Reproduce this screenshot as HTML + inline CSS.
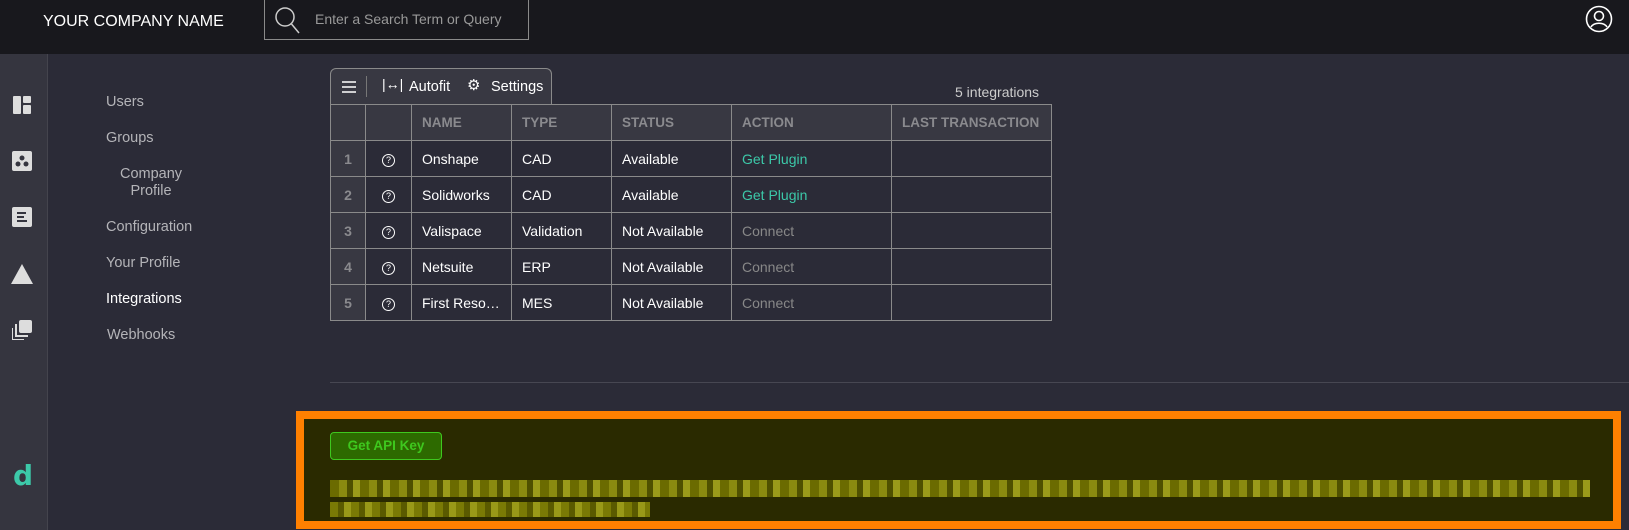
<!DOCTYPE html>
<html><head><style>
*{margin:0;padding:0;box-sizing:border-box}
body{width:1629px;height:530px;overflow:hidden;background:#2b2b37;font-family:"Liberation Sans",sans-serif;position:relative;color:#ddd}
.top{position:absolute;left:0;top:0;width:1629px;height:54px;background:#18181d}
.brand{position:absolute;left:43px;top:13px;color:#fff;font-size:16px}
.search{position:absolute;left:264px;top:-1px;width:265px;height:41px;border:1px solid #8a8a8a}
.search span{position:absolute;left:50px;top:11px;color:#999;font-size:14px}
.strip{position:absolute;left:0;top:54px;width:48px;height:476px;background:#35353f;border-right:1px solid #44444d}
.nav{position:absolute;font-size:14.5px;color:#b4b4b8}
.abs{position:absolute}
table{position:absolute;left:330px;top:104px;border-collapse:collapse;font-size:14px;table-layout:fixed;width:721px}
td{border:1px solid #8a8a8a;height:36px;padding:0 0 0 10px;color:#fff;white-space:nowrap;overflow:hidden}
th{border:1px solid #8a8a8a;height:36px;background:#383842;color:#8a8a8e;text-align:left;padding-left:10px;font-size:13.5px;white-space:nowrap}
td.n{background:#383842;color:#8a8a8e;font-weight:bold;text-align:center;padding:0}
td.q{text-align:center;padding:0}
.g{color:#3cc9a9}.c{color:#888}
.q i{display:inline-block;width:13px;height:13px;border:1.3px solid #fff;border-radius:50%;font-style:normal;font-size:9px;line-height:10px;text-align:center}
</style></head><body>
<div class="top">
<div class="brand">YOUR COMPANY NAME</div>
<div class="search"><svg class="abs" style="left:9px;top:5px" width="28" height="30" viewBox="0 0 28 30"><circle cx="11" cy="12" r="9" fill="none" stroke="#ccc" stroke-width="1.5"/><line x1="17.5" y1="19" x2="25" y2="28" stroke="#ccc" stroke-width="1.5"/></svg><span>Enter a Search Term or Query</span></div>
<svg class="abs" style="left:1585px;top:5px" width="28" height="28" viewBox="0 0 28 28"><circle cx="14" cy="14" r="12.5" fill="none" stroke="#fff" stroke-width="1.6"/><circle cx="14" cy="11" r="4.5" fill="none" stroke="#fff" stroke-width="1.6"/><path d="M6 22c3-5 13-5 16 0" fill="none" stroke="#fff" stroke-width="1.6"/></svg>
</div>
<div class="strip">
<svg class="abs" style="left:12px;top:41px" width="20" height="20"><rect x="1" y="1" width="8" height="18" rx="1" fill="#ddd"/><rect x="11" y="1" width="8" height="7" rx="1" fill="#ddd"/><rect x="11" y="10" width="8" height="9" rx="1" fill="#ddd"/></svg>
<svg class="abs" style="left:12px;top:97px" width="20" height="20"><rect x="0" y="0" width="20" height="20" rx="2" fill="#ddd"/><circle cx="10" cy="7" r="2.5" fill="#35353f"/><circle cx="6" cy="13" r="2.5" fill="#35353f"/><circle cx="14" cy="13" r="2.5" fill="#35353f"/></svg>
<svg class="abs" style="left:12px;top:153px" width="20" height="20"><rect x="0" y="0" width="20" height="20" rx="2" fill="#ddd"/><rect x="5" y="5" width="9" height="2" fill="#35353f"/><rect x="5" y="9" width="7" height="2" fill="#35353f"/><rect x="5" y="13" width="10" height="2" fill="#35353f"/></svg>
<svg class="abs" style="left:11px;top:210px" width="22" height="20"><path d="M11 0L22 20H0z" fill="#ddd"/></svg>
<svg class="abs" style="left:12px;top:266px" width="20" height="20"><rect x="7" y="0" width="13" height="13" rx="2" fill="#ddd"/><path d="M4 4v12h12M0 8v12h12" fill="none" stroke="#ddd" stroke-width="2"/></svg>
<div class="abs" style="left:13px;top:405px;color:#3cc9a9;font-weight:bold;font-size:28px;font-family:'DejaVu Sans',sans-serif">d</div>
</div>
<div class="nav" style="left:106px;top:94px">Users</div>
<div class="nav" style="left:106px;top:130px">Groups</div>
<div class="nav" style="left:120px;top:166px;text-align:center;line-height:17px">Company<br>Profile</div>
<div class="nav" style="left:106px;top:219px">Configuration</div>
<div class="nav" style="left:106px;top:255px">Your Profile</div>
<div class="nav" style="left:106px;top:291px;color:#fff">Integrations</div>
<div class="nav" style="left:107px;top:327px">Webhooks</div>

<div class="abs" style="left:330px;top:68px;width:222px;height:37px;background:#383842;border:1px solid #8a8a8a;border-bottom:none;border-radius:6px 6px 0 0;color:#fff;font-size:14.5px">
<svg class="abs" style="left:10px;top:11px" width="16" height="14"><path d="M1 2h14M1 7h14M1 12h14" stroke="#fff" stroke-width="1.4"/></svg>
<div class="abs" style="left:35px;top:7px;width:1px;height:21px;background:#777"></div>
<div class="abs" style="left:51px;top:7px;font-size:14px">|↔|</div>
<div class="abs" style="left:78px;top:10px">Autofit</div>
<div class="abs" style="left:136px;top:7px;font-size:15px">⚙</div>
<div class="abs" style="left:160px;top:10px">Settings</div>
</div>
<div class="abs" style="left:955px;top:84px;font-size:14px;color:#ccc">5 integrations</div>
<table>
<colgroup><col style="width:35px"><col style="width:46px"><col style="width:100px"><col style="width:100px"><col style="width:120px"><col style="width:160px"><col style="width:160px"></colgroup>
<tr><th style="padding:0"></th><th style="padding:0"></th><th>NAME</th><th>TYPE</th><th>STATUS</th><th>ACTION</th><th>LAST TRANSACTION</th></tr>
<tr><td class="n">1</td><td class="q"><i>?</i></td><td>Onshape</td><td>CAD</td><td>Available</td><td class="g">Get Plugin</td><td></td></tr>
<tr><td class="n">2</td><td class="q"><i>?</i></td><td>Solidworks</td><td>CAD</td><td>Available</td><td class="g">Get Plugin</td><td></td></tr>
<tr><td class="n">3</td><td class="q"><i>?</i></td><td>Valispace</td><td>Validation</td><td>Not Available</td><td class="c">Connect</td><td></td></tr>
<tr><td class="n">4</td><td class="q"><i>?</i></td><td>Netsuite</td><td>ERP</td><td>Not Available</td><td class="c">Connect</td><td></td></tr>
<tr><td class="n">5</td><td class="q"><i>?</i></td><td>First Reso…</td><td>MES</td><td>Not Available</td><td class="c">Connect</td><td></td></tr>
</table>
<div class="abs" style="left:330px;top:382px;width:1299px;height:1px;background:#474752"></div>
<div class="abs" style="left:296px;top:411px;width:1325px;height:118px;border:8px solid #ff8000;background:#2a2a00">
<div class="abs" style="left:26px;top:13px;width:112px;height:28px;background:#2d6a00;border:1px solid #3ec81e;border-radius:4px;color:#3ec81e;font-weight:bold;font-size:13.5px;text-align:center;line-height:26px">Get API Key</div>
<div class="abs" style="left:26px;top:61px;width:1260px;height:17px;background:repeating-linear-gradient(90deg,#6b6b00 0 9px,#8a8a10 9px 17px,#4f5000 17px 23px,#9a9a1a 23px 30px)"></div>
<div class="abs" style="left:26px;top:83px;width:320px;height:15px;background:repeating-linear-gradient(90deg,#7a7a05 0 8px,#5a5a00 8px 14px,#999918 14px 21px)"></div>
</div>
</body></html>
